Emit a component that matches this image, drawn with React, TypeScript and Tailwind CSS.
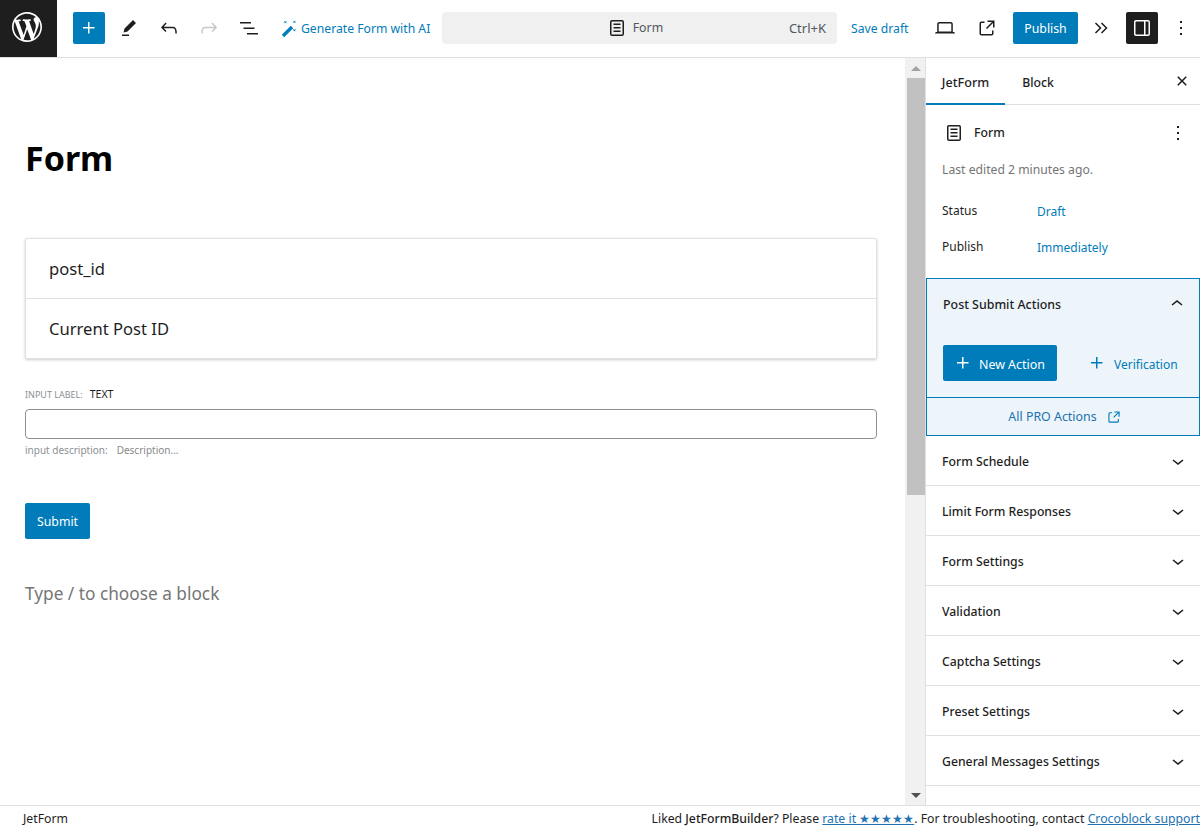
import React from 'react';

const FONT = "font-['Noto_Sans','Open_Sans',sans-serif]";

const Icon = ({ d, size = 24, className = '' }: { d: string; size?: number; className?: string }) => (
  <svg width={size} height={size} viewBox="0 0 24 24" fill="currentColor" className={className}>
    <path d={d} />
  </svg>
);

const icons = {
  plus: 'M11 12.5V17.5H12.5V12.5H17.5V11H12.5V6H11V11H6V12.5H11Z',
  pen: 'm19 7-3-3-8.5 8.5-1 4 4-1L19 7Zm-7 11.5H5V20h7v-1.5Z',
  undo: 'M18.3 11.7c-.6-.6-1.4-.9-2.3-.9H6.7l2.9-3.3-1.1-1-4.5 5L8.5 16l1-1-2.7-2.7H16c.5 0 .9.2 1.3.5 1 1 1 3.4 1 4.5v.3h1.5v-.2c0-1.5 0-4.3-1.5-5.7z',
  redo: 'M15.6 6.5l-1.1 1 2.9 3.3H8c-.9 0-1.7.3-2.3.9-1.4 1.5-1.4 4.2-1.4 5.6v.2h1.5v-.3c0-1.1 0-3.5 1-4.5.3-.3.7-.5 1.3-.5h9.2L14.5 15l1.1 1.1 4.6-4.6-4.6-5z',
  list: 'M3 6h11v1.5H3V6Zm3.5 5.5h11V13h-11v-1.5ZM21 17H10v1.5h11V17Z',
  page: 'M15.5 7.5h-7V9h7V7.5Zm-7 3.5h7v1.5h-7V11Zm7 3.5h-7V16h7v-1.5ZM17 4H7a2 2 0 0 0-2 2v12a2 2 0 0 0 2 2h10a2 2 0 0 0 2-2V6a2 2 0 0 0-2-2ZM7 5.5h10a.5.5 0 0 1 .5.5v12a.5.5 0 0 1-.5.5H7a.5.5 0 0 1-.5-.5V6a.5.5 0 0 1 .5-.5Z',
  external: 'M19.5 4.5h-7V6h4.44l-5.97 5.97 1.06 1.06L18 7.06v4.44h1.5v-7Zm-13 1a2 2 0 0 0-2 2v10a2 2 0 0 0 2 2h10a2 2 0 0 0 2-2v-3H17v3a.5.5 0 0 1-.5.5h-10a.5.5 0 0 1-.5-.5v-10a.5.5 0 0 1 .5-.5h3V5.5h-3Z',
  laptop: 'M20.5 16h-.7V8c0-1.1-.9-2-2-2H6.2c-1.1 0-2 .9-2 2v8h-.7c-.8 0-1.5.7-1.5 1.5h20c0-.8-.7-1.5-1.5-1.5zM5.7 8c0-.3.2-.5.5-.5h11.6c.3 0 .5.2.5.5v7.6H5.7V8z',
  more: 'M13 19h-2v-2h2v2zm0-6h-2v-2h2v2zm0-6h-2V5h2v2z',
  close: 'M12 13.06l3.712 3.713 1.061-1.06L13.061 12l3.712-3.712-1.06-1.06L12 10.938 8.288 7.227l-1.061 1.06L10.939 12l-3.712 3.712 1.06 1.061L12 13.061z',
  down: 'M17.5 11.6L12 16l-5.5-4.4.9-1.2L12 14l4.5-3.6 1 1.2z',
  up: 'M6.5 12.4L12 8l5.5 4.4-.9 1.2L12 10l-4.5 3.6-1-1.2z',
  drawer: 'M18 4H6c-1.1 0-2 .9-2 2v12c0 1.1.9 2 2 2h12c1.1 0 2-.9 2-2V6c0-1.1-.9-2-2-2zm-4 14.5H6c-.3 0-.5-.2-.5-.5V6c0-.3.2-.5.5-.5h8v13zm4.5-.5c0 .3-.2.5-.5.5h-2.5v-13H18c.3 0 .5.2.5.5v12z',
};

const WpLogo = () => (
  <svg width="30" height="30" viewBox="0 0 20 20" fill="#fff">
    <path d="M20 10c0-5.51-4.49-10-10-10C4.48 0 0 4.49 0 10c0 5.52 4.48 10 10 10 5.51 0 10-4.48 10-10zM7.78 15.37L4.37 6.22c.55-.02 1.17-.08 1.17-.08.5-.06.44-1.13-.06-1.11 0 0-1.45.11-2.37.11-.18 0-.37 0-.58-.01C4.12 2.69 6.87 1.11 10 1.11c2.33 0 4.45.87 6.05 2.34-.68-.11-1.65.39-1.65 1.58 0 .74.45 1.36.9 2.1.35.61.55 1.36.55 2.46 0 1.49-1.4 5-1.4 5l-3.03-8.37c.54-.02.82-.17.82-.17.5-.05.44-1.25-.06-1.22 0 0-1.44.12-2.38.12-.87 0-2.33-.12-2.33-.12-.5-.03-.56 1.2-.06 1.22l.92.08 1.26 3.41zM17.41 10c.24-.64.74-1.87.43-4.25.7 1.29 1.05 2.71 1.05 4.25 0 3.29-1.73 6.24-4.4 7.78.97-2.59 1.94-5.2 2.92-7.78zM6.1 18.09C3.12 16.65 1.11 13.53 1.11 10c0-1.3.23-2.48.72-3.59C3.25 10.3 4.67 14.2 6.1 18.09zm4.03-6.63l2.58 6.98c-.86.29-1.76.45-2.71.45-.79 0-1.57-.11-2.29-.33.81-2.38 1.62-4.74 2.42-7.1z" />
  </svg>
);

const Wand = () => (
  <svg width="20" height="20" viewBox="0 0 20 20" fill="none" stroke="#007cba" className="shrink-0">
    <path d="M3 17 12 8" strokeWidth="3.4" />
    <path d="M4.4 2.2l2 2M6.4 2.2l-2 2M13.4 1.8l2 2M15.4 1.8l-2 2M13.4 10.2l2 2M15.4 10.2l-2 2" strokeWidth="1" />
  </svg>
);

const panels = [
  'Form Schedule',
  'Limit Form Responses',
  'Form Settings',
  'Validation',
  'Captcha Settings',
  'Preset Settings',
  'General Messages Settings',
];

const Toolbar = () => (
  <header className="flex h-[58px] shrink-0 items-center border-b border-[#e0e0e0] bg-white">
    <div className="flex h-[57px] w-[57px] shrink-0 items-center justify-center bg-[#1e1e1e] pr-[3px] pb-[3px]">
      <WpLogo />
    </div>
    <button className="mb-[2px] ml-4 flex h-8 w-8 items-center justify-center rounded-[2px] bg-[#007cba] text-white">
      <Icon d={icons.plus} />
    </button>
    <Icon d={icons.pen} className="mb-[2px] ml-[12px] text-[#1e1e1e]" />
    <Icon d={icons.undo} className="mb-[2px] ml-[16px] text-[#1e1e1e]" />
    <Icon d={icons.redo} className="mb-[2px] ml-[16px] text-[#c8c8c8]" />
    <Icon d={icons.list} className="mb-[2px] ml-[16px] text-[#1e1e1e]" />
    <div className="ml-[19px] flex w-[150px] items-center text-[12.2px] whitespace-nowrap text-[#007cba]">
      <Wand />
      <span className="ml-px pt-px">Generate Form with AI</span>
    </div>
    <div className="mb-[2px] ml-3 flex h-8 w-[395px] items-center rounded bg-[#f0f0f0] pr-[11px] text-[#1e1e1e]">
      <div className="flex flex-1 items-center justify-center pl-[37px]">
        <Icon d={icons.page} />
        <span className="ml-[4px] pt-[2px] text-[12.3px] text-[#50575e]">Form</span>
      </div>
      <span className="pt-[3px] text-[13px] text-[#50575e]">Ctrl+K</span>
    </div>
    <span className="ml-[14px] w-[58px] pt-px text-[12.2px] whitespace-nowrap text-[#007cba]">Save draft</span>
    <Icon d={icons.laptop} className="mb-[2px] ml-[24px] text-[#1e1e1e]" />
    <Icon d={icons.external} className="mb-[2px] ml-[18px] text-[#1e1e1e]" />
    <button className="mb-[2px] ml-[14px] h-8 w-[65px] rounded-[2px] bg-[#007cba] pt-[3px] text-[12.3px] text-white">Publish</button>
    <svg width="24" height="24" viewBox="0 0 24 24" fill="none" stroke="#1e1e1e" strokeWidth="1.5" className="mb-[2px] ml-[11px]">
      <path d="m6.5 7 5 5-5 5M12.5 7l5 5-5 5" />
    </svg>
    <button className="mb-[2px] ml-[13px] flex h-8 w-8 items-center justify-center rounded-[2px] bg-[#1e1e1e] text-white">
      <Icon d={icons.drawer} />
    </button>
    <Icon d={icons.more} className="mb-[2px] ml-[11px] text-[#1e1e1e]" />
  </header>
);

const Canvas = () => (
  <main className="min-w-0 flex-1 bg-white pt-[78px] pr-[28px] pl-[25px]">
    <h1 className="text-[34px] leading-[44px] font-bold text-black">Form</h1>
    <div className="mt-[58px] rounded-[2px] border border-[#e0e0e0] shadow-[0_1px_3px_rgba(0,0,0,0.2)]">
      <div className="flex h-[60px] items-center border-b border-[#e0e0e0] pt-[2px] pl-[23px] text-[16.6px] text-[#1e1e1e]">post_id</div>
      <div className="flex h-[59px] items-center pt-[2px] pl-[23px] text-[16.6px] text-[#1e1e1e]">Current Post ID</div>
    </div>
    <div className="mt-[29px] flex h-[14px] items-center">
      <span className="text-[9px] text-[#8c8f94]">INPUT LABEL:</span>
      <span className="ml-[7px] text-[10.5px] text-[#1e1e1e]">TEXT</span>
    </div>
    <div className="mt-[7px] h-[30px] rounded border border-[#8c8f94] bg-white" />
    <div className="mt-[4px] flex h-[15px] items-center text-[10px]">
      <span className="text-[#8c8f94]">input description:</span>
      <span className="ml-[9px] text-[#8a8a8a]">Description...</span>
    </div>
    <button className="mt-[45px] h-9 w-[65px] rounded-[2px] bg-[#007cba] pt-[2px] text-[12.3px] text-white">Submit</button>
    <p className="mt-[41px] text-[17.25px] leading-7 text-[#757575]">Type / to choose a block</p>
  </main>
);

const Scrollbar = () => (
  <div className="flex w-5 shrink-0 flex-col bg-[#f1f1f1] pl-[2px]">
    <div className="flex h-5 items-center justify-center">
      <div className="h-0 w-0 border-x-[5px] border-b-[5px] border-x-transparent border-b-[#a3a3a3]" />
    </div>
    <div className="h-[417px] bg-[#c1c1c1]" />
    <div className="flex-1" />
    <div className="flex h-5 items-center justify-center">
      <div className="h-0 w-0 border-x-[5px] border-t-[5px] border-x-transparent border-t-[#505050]" />
    </div>
  </div>
);

const Sidebar = () => (
  <aside className="flex w-[275px] shrink-0 flex-col border-l border-[#e0e0e0] bg-white text-[12.25px] text-[#1e1e1e]">
    <div className="flex h-[47px] shrink-0 items-stretch border-b border-[#e0e0e0]">
      <div className="-mb-px flex w-[79px] items-center justify-center border-b-[2px] border-[#007cba] pt-[5px] text-[12.6px] font-medium">JetForm</div>
      <div className="flex w-[66px] items-center justify-center pt-[5px] font-medium">Block</div>
      <div className="ml-auto flex items-center pr-[6px]">
        <Icon d={icons.close} />
      </div>
    </div>
    <div className="flex h-[173px] shrink-0 flex-col pl-[16px]">
      <div className="mt-[16px] flex h-6 items-center pr-[10px]">
        <Icon d={icons.page} />
        <span className="ml-2 font-medium">Form</span>
        <Icon d={icons.more} className="ml-auto" />
      </div>
      <p className="mt-[16px] text-[12.2px] text-[#757575]">Last edited 2 minutes ago.</p>
      <div className="mt-[23px] flex items-start text-[12px]">
        <span className="w-[95px]">Status</span>
        <span className="pt-px text-[#007cba]">Draft</span>
      </div>
      <div className="mt-[17px] flex items-start text-[12px]">
        <span className="w-[95px]">Publish</span>
        <span className="pt-px text-[#007cba]">Immediately</span>
      </div>
    </div>
    <section className="h-[158px] shrink-0 border border-[#007cba] bg-[#edf5fb]">
      <div className="flex h-[50px] items-center pr-[10px] pl-[16px] font-medium">
        <span className="pt-[2px] text-[12.4px]">Post Submit Actions</span>
        <Icon d={icons.up} className="ml-auto" />
      </div>
      <div className="flex h-[68px] items-start pl-[16px] pt-[16px]">
        <button className="flex h-9 w-[114px] items-center rounded-[2px] bg-[#007cba] pl-[8px] text-white">
          <Icon d={icons.plus} />
          <span className="ml-[4px] pt-[4px] text-[12.4px]">New Action</span>
        </button>
        <div className="ml-[28px] flex h-9 items-center text-[#007cba]">
          <Icon d={icons.plus} />
          <span className="ml-[5px] pt-[3px] text-[12px]">Verification</span>
        </div>
      </div>
      <div className="flex h-[38px] items-center justify-center border-t border-[#007cba] pl-[5px] text-[#2271b1]">
        <span className="pt-[2px] text-[12.4px]">All PRO Actions</span>
        <Icon d={icons.external} size={18} className="ml-2 text-[#007cba]" />
      </div>
    </section>
    {panels.map((title) => (
      <div key={title} className="flex h-[50px] shrink-0 items-center border-b border-[#e0e0e0] pr-[10px] pl-[16px] font-medium">
        <span className="pt-[3px]">{title}</span>
        <Icon d={icons.down} className="ml-auto" />
      </div>
    ))}
  </aside>
);

const StatusBar = () => (
  <footer className="flex h-[21px] shrink-0 items-center justify-between border-t border-[#e0e0e0] bg-white pt-[7px] pl-[23px] text-[12.25px] text-[#1e1e1e]">
    <span>JetForm</span>
    <span className="whitespace-nowrap">
      Liked <span className="font-medium">JetFormBuilder</span>? Please{' '}
      <a className="text-[#2271b1] underline">rate it ★★★★★</a>. For troubleshooting, contact{' '}
      <a className="text-[#2271b1] underline">Crocoblock support</a>
    </span>
  </footer>
);

const App = () => (
  <div className={`flex h-[826px] w-[1200px] flex-col overflow-hidden bg-white ${FONT}`}>
    <Toolbar />
    <div className="flex min-h-0 flex-1">
      <Canvas />
      <Scrollbar />
      <Sidebar />
    </div>
    <StatusBar />
  </div>
);

export default App;
